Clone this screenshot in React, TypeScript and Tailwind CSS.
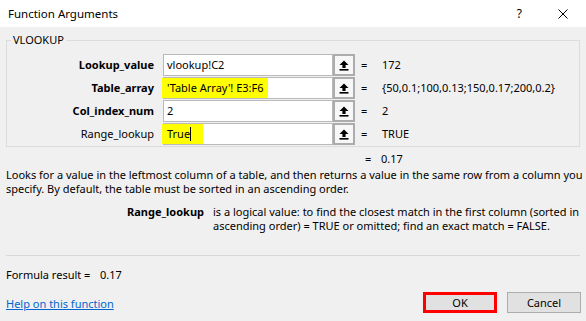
import React from 'react';

type Arg = {
  name: string;
  bold: boolean;
  value: string;
  result: string;
  mark?: number;
  caret?: boolean;
};

const args: Arg[] = [
  { name: 'Lookup_value', bold: true, value: 'vlookup!C2', result: '172' },
  { name: 'Table_array', bold: true, value: "'Table Array'! E3:F6", result: '{50,0.1;100,0.13;150,0.17;200,0.2}', mark: 106 },
  { name: 'Col_index_num', bold: true, value: '2', result: '2' },
  { name: 'Range_lookup', bold: false, value: 'True', result: 'TRUE', mark: 41, caret: true },
];

const RefButton: React.FC = () => (
  <div className="w-[22px] h-[22px] border-2 border-[#acacac] bg-[#f7f7f7] flex items-center justify-center">
    <svg width="10" height="11" viewBox="0 0 10 11">
      <path d="M5 0.5 L9.5 5 H6.6 V8 H3.4 V5 H0.5 Z" fill="#000" />
      <rect x="0.5" y="9" width="9" height="1.6" fill="#000" />
    </svg>
  </div>
);

const ArgRow: React.FC<{ arg: Arg }> = ({ arg }) => (
  <div className="flex items-center h-[22px]">
    <div className={`w-[147px] text-right pr-0 ${arg.bold ? 'font-bold' : ''}`}>{arg.name}</div>
    <div className="ml-[9px] w-[170px] h-[22px] bg-white border border-[#b9b9b9] flex items-center">
      {arg.mark ? (
        <span
          className={`-ml-[2px] h-[20px] bg-[#ffff00] flex items-center pl-[5px] ${arg.mark === 106 ? 'w-[106px]' : 'w-[41px]'}`}
        >
          {arg.value}
          {arg.caret && <span className="w-px h-[14px] bg-black" />}
        </span>
      ) : (
        <span className="pl-[3px]">{arg.value}</span>
      )}
    </div>
    <RefButton />
    <span className="ml-[3px] w-[24px] pl-[3px]">=</span>
    <span>{arg.result}</span>
  </div>
);

export default function App() {
  return (
    <div className="w-[586px] h-[321px] bg-[#f0f0f0] text-black text-[11px] leading-[14px] font-['Segoe_UI','Noto_Sans',sans-serif] flex flex-col overflow-hidden">
      <div className="h-[27px] bg-white flex items-center pl-[8px] pr-[18px] shrink-0">
        <span className="flex-1 text-[11.5px]">Function Arguments</span>
        <span className="text-[12px] mr-[36px]">?</span>
        <svg width="10" height="10" viewBox="0 0 10 10">
          <path d="M0.5 0.5 L9.5 9.5 M9.5 0.5 L0.5 9.5" stroke="#000" strokeWidth="1" />
        </svg>
      </div>

      <fieldset className="mx-[6px] mt-[6px] border border-[#dcdcdc] pt-[7px] pb-[1px] flex flex-col gap-[1px]">
        <legend className="ml-[4px] px-[2px] leading-[14px]">VLOOKUP</legend>
        {args.map((a) => (
          <ArgRow key={a.name} arg={a} />
        ))}
      </fieldset>

      <div className="mt-[5px] flex">
        <span className="ml-[365px] w-[16px]">=</span>
        <span>0.17</span>
      </div>

      <p className="mt-[2px] pl-[6px] pr-0">
        Looks for a value in the leftmost column of a table, and then returns a value in the same row from a column you
        specify. By default, the table must be sorted in an ascending order.
      </p>

      <div className="mt-[9px] flex">
        <div className="w-[204px] text-right font-bold shrink-0">Range_lookup</div>
        <p className="ml-[9px] pr-[4px]">
          is a logical value: to find the closest match in the first column (sorted in ascending order) = TRUE or
          omitted; find an exact match = FALSE.
        </p>
      </div>

      <div className="mt-[22px] mx-[6px] h-px bg-[#d7d7d7]" />

      <div className="mt-[12px] px-[6px] flex">
        <span className="w-[94px]">Formula result =</span>
        <span>0.17</span>
      </div>

      <div className="mt-[10px] pl-[6px] pr-[5px] flex items-center">
        <a href="#" className="flex-1 mt-[3px] text-[#0066cc] underline">
          Help on this function
        </a>
        <button className="w-[74px] h-[21px] border-[3px] border-[#ff0000] bg-[#e1e1e1] flex items-center justify-center">
          OK
        </button>
        <button className="ml-[10px] w-[74px] h-[21px] border border-[#adadad] bg-[#e1e1e1] flex items-center justify-center">
          Cancel
        </button>
      </div>
    </div>
  );
}
